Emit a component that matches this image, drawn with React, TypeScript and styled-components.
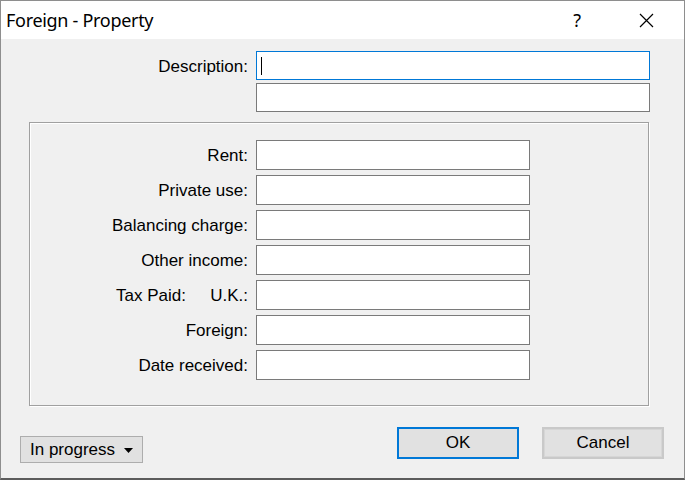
import { createGlobalStyle, styled } from 'styled-components';

const GlobalStyle = createGlobalStyle`
  html, body {
    margin: 0;
    padding: 0;
    background: #f0f0f0;
  }
  * {
    box-sizing: border-box;
  }
`;

const rows = [
  { label: 'Rent:' },
  { label: 'Private use:' },
  { label: 'Balancing charge:' },
  { label: 'Other income:' },
  { label: 'U.K.:', prefix: 'Tax Paid:' },
  { label: 'Foreign:' },
  { label: 'Date received:' },
];

const App = () => {
  return (
    <>
      <GlobalStyle />
      <Window>
        <TitleBar>
          <Title>Foreign - Property</Title>
          <HelpGlyph>?</HelpGlyph>
          <CloseIcon width="15" height="15" viewBox="0 0 15 15">
            <path d="M1 1L14 14M14 1L1 14" stroke="#000" strokeWidth="1.2" fill="none" />
          </CloseIcon>
        </TitleBar>
        <Body>
          <DescriptionGrid>
            <Label>Description:</Label>
            <Field $focused>
              <Caret />
            </Field>
            <span />
            <Field />
          </DescriptionGrid>
          <GroupBox>
            {rows.map((row) => (
              <GroupRow key={row.label}>
                <LabelCell $split={!!row.prefix}>
                  {row.prefix && <Label>{row.prefix}</Label>}
                  <Label>{row.label}</Label>
                </LabelCell>
                <Field />
              </GroupRow>
            ))}
          </GroupBox>
          <Footer>
            <StatusButton>
              In progress
              <DropArrow width="9" height="5" viewBox="0 0 9 5">
                <path d="M0 0H9L4.5 5Z" fill="#000" />
              </DropArrow>
            </StatusButton>
            <Spacer />
            <DialogButton $primary>OK</DialogButton>
            <DialogButton>Cancel</DialogButton>
          </Footer>
        </Body>
      </Window>
    </>
  );
};

export default App;

const Window = styled.div`
  display: flex;
  flex-direction: column;

  width: 685px;
  height: 480px;
  border: 1px solid #8e8e8e;
  border-bottom-color: #5c5c5c;
  border-bottom-width: 2px;

  font-family: 'Liberation Sans', Arial, sans-serif;
  font-size: 17px;
  color: #000;
`;

const TitleBar = styled.div`
  display: flex;
  align-items: center;

  height: 38px;
  padding: 0 30px 0 5px;
  background: #fff;
`;

const Title = styled.div`
  flex: 1;
  font-family: 'Noto Sans', 'Liberation Sans', sans-serif;
  font-size: 18px;
  letter-spacing: -0.3px;
`;

const HelpGlyph = styled.div`
  margin-right: 58px;
  font-family: 'Noto Sans', 'Liberation Sans', sans-serif;
  font-size: 18px;
`;

const CloseIcon = styled.svg`
  display: block;
`;

const Body = styled.div`
  display: flex;
  flex-direction: column;
  flex: 1;

  padding-top: 12px;
  background: #f0f0f0;
`;

const DescriptionGrid = styled.div`
  display: grid;
  grid-template-columns: 247px 394px;
  grid-auto-rows: 29px;
  column-gap: 8px;
  row-gap: 3px;
  align-items: center;
`;

const Label = styled.span`
  text-align: right;
  white-space: nowrap;
  line-height: 20px;
  padding-top: 2px;
`;

const Field = styled.div<{ $focused?: boolean }>`
  display: flex;
  align-items: center;

  height: 100%;
  padding-left: 4px;
  background: #fff;
  border: 1px solid ${(p) => (p.$focused ? '#0078d7' : '#7a7a7a')};
`;

const Caret = styled.span`
  width: 1px;
  height: 18px;
  background: #000;
`;

const GroupBox = styled.div`
  display: flex;
  flex-direction: column;
  gap: 5px;

  width: 620px;
  height: 284px;
  margin: 10px 0 0 28px;
  padding-top: 17px;
  border: 1px solid #a0a0a0;
  box-shadow: inset 1px 1px 0 #fff, 1px 1px 0 #fff;
`;

const GroupRow = styled.div`
  display: grid;
  grid-template-columns: 218px 274px;
  column-gap: 8px;
  align-items: center;

  height: 30px;
`;

const LabelCell = styled.div<{ $split?: boolean }>`
  display: flex;
  justify-content: ${(p) => (p.$split ? 'space-between' : 'flex-end')};
  padding-left: ${(p) => (p.$split ? '86px' : '0')};
`;

const Footer = styled.div`
  display: flex;
  align-items: flex-start;
  gap: 23px;

  padding: 21px 20px 0 19px;
`;

const StatusButton = styled.div`
  display: flex;
  align-items: center;
  justify-content: space-between;

  width: 123px;
  height: 27px;
  margin-top: 9px;
  padding: 0 9px 0 9px;
  background: #e1e1e1;
  border: 1px solid #adadad;
`;

const DropArrow = styled.svg`
  display: block;
  margin-top: 1px;
`;

const Spacer = styled.div`
  flex: 1;
`;

const DialogButton = styled.div<{ $primary?: boolean }>`
  display: flex;
  align-items: center;
  justify-content: center;

  width: 122px;
  height: 32px;
  background: #e1e1e1;
  border: ${(p) => (p.$primary ? '2px solid #0078d7' : '2px solid #c9c9c9')};
  ${(p) => (p.$primary ? '' : 'box-shadow: inset 0 0 0 1px #d6d6d6;')}
`;
